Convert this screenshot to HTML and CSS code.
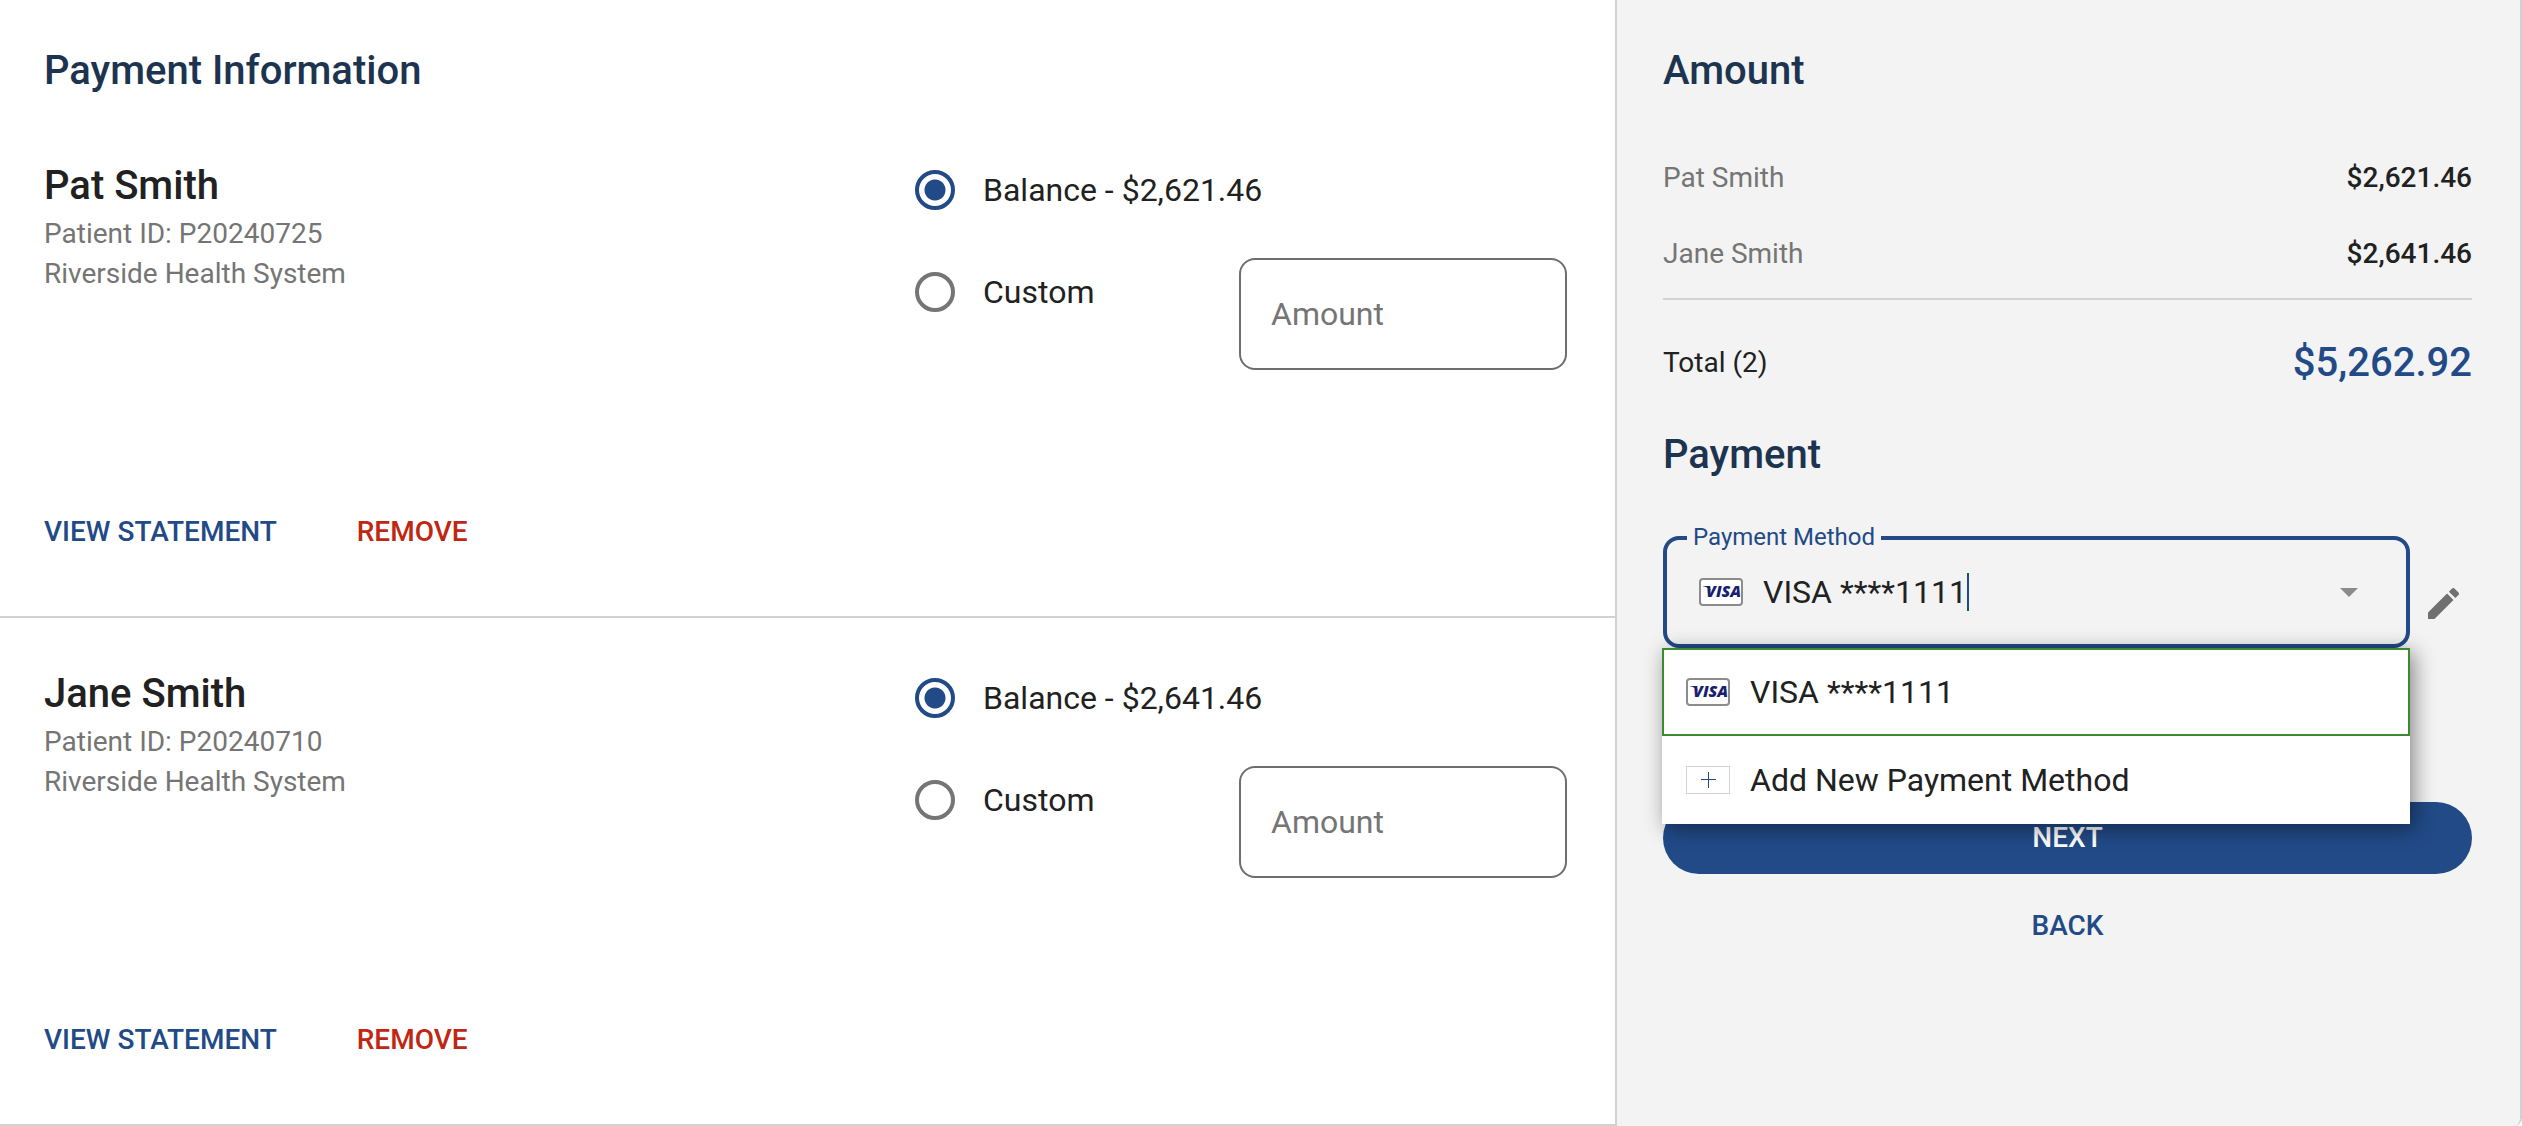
FILE: index.html
```html
<!DOCTYPE html>
<html lang="en">
<head>
<meta charset="utf-8">
<meta name="viewport" content="width=device-width, initial-scale=1">
<title>Payment Information</title>
<link rel="stylesheet" href="styles.css">
</head>
<body>
<main class="page">
  <section class="details">
    <h2 class="heading details-heading">Payment Information</h2>

    <article class="patient">
      <div class="patient-info">
        <h3 class="patient-name">Pat Smith</h3>
        <p class="patient-meta">Patient ID: P20240725</p>
        <p class="patient-meta">Riverside Health System</p>
        <div class="actions">
          <button class="text-button" type="button">VIEW STATEMENT</button>
          <button class="text-button danger" type="button">REMOVE</button>
        </div>
      </div>
      <div class="choices">
        <label class="choice"><input class="radio" type="radio" name="pat" checked>Balance - $2,621.46</label>
        <div class="custom">
          <label class="choice"><input class="radio" type="radio" name="pat">Custom</label>
          <input class="amount-input" type="text" placeholder="Amount" aria-label="Amount for Pat Smith">
        </div>
      </div>
    </article>

    <article class="patient">
      <div class="patient-info">
        <h3 class="patient-name">Jane Smith</h3>
        <p class="patient-meta">Patient ID: P20240710</p>
        <p class="patient-meta">Riverside Health System</p>
        <div class="actions">
          <button class="text-button" type="button">VIEW STATEMENT</button>
          <button class="text-button danger" type="button">REMOVE</button>
        </div>
      </div>
      <div class="choices">
        <label class="choice"><input class="radio" type="radio" name="jane" checked>Balance - $2,641.46</label>
        <div class="custom">
          <label class="choice"><input class="radio" type="radio" name="jane">Custom</label>
          <input class="amount-input" type="text" placeholder="Amount" aria-label="Amount for Jane Smith">
        </div>
      </div>
    </article>
  </section>

  <aside class="summary">
    <h2 class="heading">Amount</h2>
    <dl class="lines">
      <div class="line"><dt>Pat Smith</dt><dd>$2,621.46</dd></div>
      <div class="line"><dt>Jane Smith</dt><dd>$2,641.46</dd></div>
      <div class="line total"><dt>Total (2)</dt><dd>$5,262.92</dd></div>
    </dl>

    <h2 class="heading">Payment</h2>
    <div class="method-row">
      <div class="method">
        <label class="method-label" for="method">Payment Method</label>
        <svg class="card-icon" viewBox="0 0 44 28" aria-hidden="true">
          <rect x="1" y="1" width="42" height="26" rx="3" fill="#fff" stroke="#8c8c8c" stroke-width="2"/>
          <path d="M4 8h6l2 5C10 10.500 7 8.800 4 8.300z" fill="#1a1f71"/>
          <text class="visa-word" x="7" y="19">VISA</text>
        </svg>
        <input class="method-input" id="method" type="text" role="combobox" aria-expanded="true" aria-controls="methods" size="12" value="VISA ****1111">
        <span class="caret"></span>
        <svg class="arrow" viewBox="0 0 18 9" aria-hidden="true"><path d="M0 0h18L9 9z"/></svg>
        <div class="menu" id="methods" role="listbox">
          <button class="option selected" type="button" role="option" aria-selected="true">
            <svg class="card-icon" viewBox="0 0 44 28" aria-hidden="true">
              <rect x="1" y="1" width="42" height="26" rx="3" fill="#fff" stroke="#8c8c8c" stroke-width="2"/>
              <path d="M4 8h6l2 5C10 10.500 7 8.800 4 8.300z" fill="#1a1f71"/>
              <text class="visa-word" x="7" y="19">VISA</text>
            </svg>VISA ****1111
          </button>
          <button class="option" type="button" role="option" aria-selected="false">
            <svg class="card-icon" viewBox="0 0 44 28" aria-hidden="true">
              <rect x=".5" y=".5" width="43" height="27" fill="#fff" stroke="#d3d3d3"/>
              <path d="M15 13.500h15M22.500 6v16" stroke="#214a87"/>
            </svg>Add New Payment Method
          </button>
        </div>
      </div>
      <button class="edit" type="button" aria-label="Edit payment method">
        <svg viewBox="3 3 18 18" aria-hidden="true"><path d="M3 17.250V21h3.750L17.810 9.940l-3.750-3.750L3 17.250zM20.710 7.040c.39-.39.39-1.020 0-1.410l-2.340-2.340c-.39-.39-1.020-.39-1.410 0l-1.830 1.830 3.750 3.750 1.830-1.830z"/></svg>
      </button>
    </div>
    <button class="next" type="button">NEXT</button>
    <button class="text-button back" type="button">BACK</button>
  </aside>
</main>
</body>
</html>
```
FILE: styles.css
```css
* { box-sizing: border-box; }

body {
  margin: 0;
  background: #fff;
  color: #212121;
  font: 400 32px/40px Roboto, sans-serif;
}

h2, h3, p, dl, dd { margin: 0; }

button, input { font: inherit; color: inherit; }

button { cursor: pointer; }

.page {
  display: grid;
  grid-template-columns: 1615fr 907fr;
  min-height: 100vh;
}

.heading {
  color: #1c344f;
  font-size: 40px;
  font-weight: 500;
  line-height: 48px;
}

/* Patients */
.details-heading { padding: 47px 44px 15px; }

.patient {
  display: flex;
  justify-content: space-between;
  padding: 48px 48px 60px 44px;
  border-bottom: 2px solid #d1d1d1;
}

.patient-info {
  display: flex;
  flex-direction: column;
}

.patient-name {
  font-size: 40px;
  font-weight: 500;
  line-height: 56px;
}

.patient-meta {
  color: #757575;
  font-size: 28px;
}

.actions {
  display: flex;
  gap: 80px;
  padding-top: 214px;
}

.text-button {
  padding: 0;
  border: 0;
  background: none;
  color: #214a87;
  font-size: 28px;
  font-weight: 500;
  line-height: 48px;
}

.danger { color: #c02612; }

.choices { width: 652px; padding-top: 12px; }

.choice {
  display: flex;
  align-items: center;
  gap: 28px;
}

.radio {
  appearance: none;
  width: 40px;
  height: 40px;
  margin: 0;
  border: 4px solid #757575;
  border-radius: 50%;
}

.radio:checked {
  border-color: #214a87;
  background: radial-gradient(circle, #214a87 10px, transparent 11px);
}

.custom {
  display: flex;
  justify-content: space-between;
  align-items: flex-start;
  padding-top: 48px;
}

.custom .choice { padding-top: 14px; }

.amount-input {
  width: 328px;
  height: 112px;
  padding: 0 30px;
  border: 2px solid #6e6e6e;
  border-radius: 16px;
  background: #fff;
}

.amount-input::placeholder { color: #757575; opacity: 1; }

/* Summary */
.summary {
  display: flex;
  flex-direction: column;
  padding: 47px 48px 48px 46px;
  border: solid #d1d1d1;
  border-width: 0 2px;
  border-bottom-right-radius: 8px;
  background: #f3f3f3;
}

.lines { padding: 45px 0 5px; }

.line {
  display: flex;
  justify-content: space-between;
  align-items: center;
  height: 76px;
  font-size: 28px;
}

.line dt { color: #757575; }
.line dd { font-weight: 500; }

.total {
  height: 128px;
  margin-top: 6px;
  border-top: 2px solid #d1d1d1;
}

.total dt { color: #212121; }

.total dd {
  color: #214a87;
  font-size: 40px;
}

.method-row {
  display: flex;
  align-items: center;
  gap: 18px;
  padding: 57px 13px 154px 0;
}

.method {
  position: relative;
  display: flex;
  flex: 1;
  align-items: center;
  height: 112px;
  padding: 0 48px 0 32px;
  border: 4px solid #214a87;
  border-radius: 16px;
}

.method-label {
  position: absolute;
  top: -19px;
  left: 20px;
  padding: 0 6px;
  background: #f3f3f3;
  color: #214a87;
  font-size: 24px;
  line-height: 32px;
}

.card-icon {
  flex: none;
  width: 44px;
  height: 28px;
}

.visa-word {
  fill: #1a1f71;
  font: italic 800 16px "Open Sans", sans-serif;
}

.method-input {
  field-sizing: content;
  margin-left: 20px;
  padding: 0;
  border: 0;
  outline: 0;
  background: none;
}

.caret {
  width: 2px;
  height: 38px;
  background: #214a87;
}

.arrow {
  width: 18px;
  height: 9px;
  margin-left: auto;
  fill: #8b8b8b;
}

.menu {
  position: absolute;
  top: 108px;
  right: -4px;
  left: -5px;
  z-index: 1;
  background: #fff;
  box-shadow: 4px 4px 20px rgba(0, 0, 0, .45);
}

.option {
  display: flex;
  align-items: center;
  gap: 20px;
  width: 100%;
  height: 88px;
  padding: 0 22px;
  border: 2px solid transparent;
  background: none;
  text-align: left;
}

.option.selected { border-color: #3b8a32; }

.edit {
  display: flex;
  width: 31px;
  height: 31px;
  margin-top: 22px;
  padding: 0;
  border: 0;
  background: none;
  fill: #707070;
}

.next {
  height: 72px;
  border: 0;
  border-radius: 36px;
  background: #214a87;
  color: #fff;
  font-size: 28px;
  font-weight: 500;
}

.back { margin-top: 28px; }
```
